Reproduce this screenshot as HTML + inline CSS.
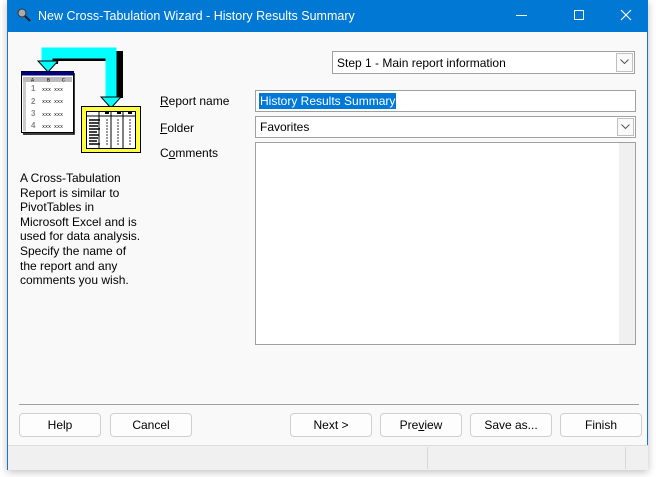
<!DOCTYPE html>
<html><head><style>
*{box-sizing:border-box;margin:0;padding:0}
body{width:656px;height:477px;background:#fff;font-family:"Liberation Sans",sans-serif;font-size:12px;color:#000;position:relative;overflow:hidden}
.win{position:absolute;left:7px;top:0;width:641px;height:470px;background:#f9f9f9;border:1px solid #1a73d0;border-top:none;box-shadow:0 2px 8px rgba(0,0,0,.25)}
.title{position:absolute;left:0;top:0;width:640px;height:32px;background:#0078d4;color:#fff;font-size:12.5px}
.abs{position:absolute}
.btn{position:absolute;top:413px;height:24px;background:#fdfdfd;border:1px solid #d0d0d0;border-radius:4px;text-align:center;line-height:22px;font-size:12px}
.lbl{position:absolute;left:159px;font-size:12px}
.box{position:absolute;background:#fff;border:1px solid #a0a0a0}
</style></head><body>
<div class="win">
<div class="title">
  <svg class="abs" style="left:8px;top:7px" width="16" height="16"><circle cx="6" cy="6" r="4" fill="#aaa" stroke="#333"/><path d="M9 9L14 14" stroke="#222" stroke-width="2"/></svg>
  <span class="abs" style="left:30px;top:9px">New Cross-Tabulation Wizard - History Results Summary</span>
  <div class="abs" style="left:508px;top:15px;width:11px;height:1px;background:#fff"></div>
  <div class="abs" style="left:566px;top:10px;width:10px;height:10px;border:1px solid #fff"></div>
  <svg class="abs" style="left:612px;top:9px" width="12" height="12"><path d="M1 1L11 11M11 1L1 11" stroke="#fff" stroke-width="1.2"/></svg>
</div>
<!-- icon (page coords offset by -7) -->
<svg class="abs" style="left:-7px;top:0" width="150" height="160">
  <path d="M52 64V56H117V98" fill="none" stroke="#000" stroke-width="10"/>
  <path d="M46 66V53H110V98" fill="none" stroke="#00ffff" stroke-width="11"/>
  <path d="M37 61H57L47 72Z" fill="#00ffff" stroke="#000"/>
  <path d="M100 97H120L110 108Z" fill="#00ffff" stroke="#000"/>
  <rect x="20.5" y="71.5" width="52" height="61" fill="#fff" stroke="#000"/>
  <path d="M73 73V134H22" fill="none" stroke="#000" stroke-width="1.5"/>
  <rect x="20.5" y="71.5" width="52" height="4" fill="#00007a"/>
  <rect x="22" y="77" width="49" height="5" fill="#bbb"/>
  <rect x="22" y="82" width="3" height="49" fill="#ccc"/>
  <g font-size="5" font-family="Liberation Mono"><text x="30" y="81.5">A</text><text x="46" y="81.5">B</text><text x="61" y="81.5">C</text></g>
  <g font-size="8" fill="#888" font-family="Liberation Sans" font-weight="bold"><text x="30" y="91">1</text><text x="30" y="104">2</text><text x="30" y="116">3</text><text x="30" y="128">4</text></g>
  <g font-size="5" font-family="Liberation Mono"><text x="41" y="91">xxx xxx</text><text x="41" y="103">xxx xxx</text><text x="41" y="116">xxx xxx</text><text x="41" y="128">xxx xxx</text></g>
  <rect x="80.5" y="106.5" width="59" height="46" fill="#ffff40" stroke="#000"/>
  <rect x="85.5" y="111.5" width="49" height="37" fill="#fff" stroke="#000"/>
  <path d="M85 116H135M98 111V148M110 111V148M122 111V148" stroke="#000" fill="none"/>
  <path d="M104 113H108M116 113H120M127 113H131" stroke="#000" stroke-width="2"/>
  <g stroke="#000" stroke-width="1.5"><path d="M88 120H99M88 123H98M88 126H97M88 129H99M88 132H96M88 135H98M88 138H97M88 141H96M88 144H99"/></g>
  <g stroke="#999" stroke-width="2" stroke-dasharray="2 1"><path d="M106 119V146M117 119V146M129 119V146"/></g>
</svg>
<div class="abs" style="left:12px;top:171px;line-height:14.6px;white-space:nowrap">A Cross-Tabulation<br>Report is similar to<br>PivotTables in<br>Microsoft Excel and is<br>used for data analysis.<br>Specify the name of<br>the report and any<br>comments you wish.</div>
<!-- step combo -->
<div class="box" style="left:324px;top:51px;width:303px;height:23px;border-color:#a0a0a0"><span class="abs" style="left:4px;top:4px">Step 1 - Main report information</span>
<div class="abs" style="right:1px;top:1px;width:17px;height:19px;border:1px solid #c0c0c0;background:#fafafa"></div>
<svg class="abs" style="right:5px;top:7px" width="9" height="6"><path d="M0.5 0.5L4.5 4.5L8.5 0.5" fill="none" stroke="#555"/></svg></div>
<div class="lbl" style="left:152px;top:94px"><u>R</u>eport name</div>
<div class="lbl" style="left:152px;top:121px"><u>F</u>older</div>
<div class="lbl" style="left:152px;top:146px">C<u>o</u>mments</div>
<div class="box" style="left:247px;top:90px;width:381px;height:22px"><span class="abs" style="left:3px;top:2px;background:#0078d7;color:#fff;padding:1px 1px">History Results Summary</span></div>
<div class="box" style="left:247px;top:116px;width:381px;height:22px"><span class="abs" style="left:4px;top:3px">Favorites</span>
<div class="abs" style="right:1px;top:1px;width:17px;height:18px;border:1px solid #c0c0c0;background:#fafafa"></div>
<svg class="abs" style="right:5px;top:7px" width="9" height="6"><path d="M0.5 0.5L4.5 4.5L8.5 0.5" fill="none" stroke="#555"/></svg></div>
<div class="box" style="left:247px;top:142px;width:381px;height:203px"><div class="abs" style="right:0;top:0;width:16px;height:201px;background:#f0f0f0"></div></div>
<div class="abs" style="left:11px;top:404px;width:620px;height:1px;background:#a0a0a0"></div>
<div class="btn" style="left:11px;width:82px">Help</div>
<div class="btn" style="left:102px;width:82px">Cancel</div>
<div class="btn" style="left:282px;width:82px">Next &gt;</div>
<div class="btn" style="left:372px;width:82px">Pre<u>v</u>iew</div>
<div class="btn" style="left:462px;width:82px">Save as...</div>
<div class="btn" style="left:552px;width:82px">Finish</div>
<div class="abs" style="left:0;top:445px;width:640px;height:25px;background:#f0f0f0;border-top:1px solid #dcdcdc"></div>
<div class="abs" style="left:419px;top:447px;width:1px;height:22px;background:#d8d8d8"></div>
<div class="abs" style="left:617px;top:447px;width:1px;height:22px;background:#d8d8d8"></div>
</div>
</body></html>
